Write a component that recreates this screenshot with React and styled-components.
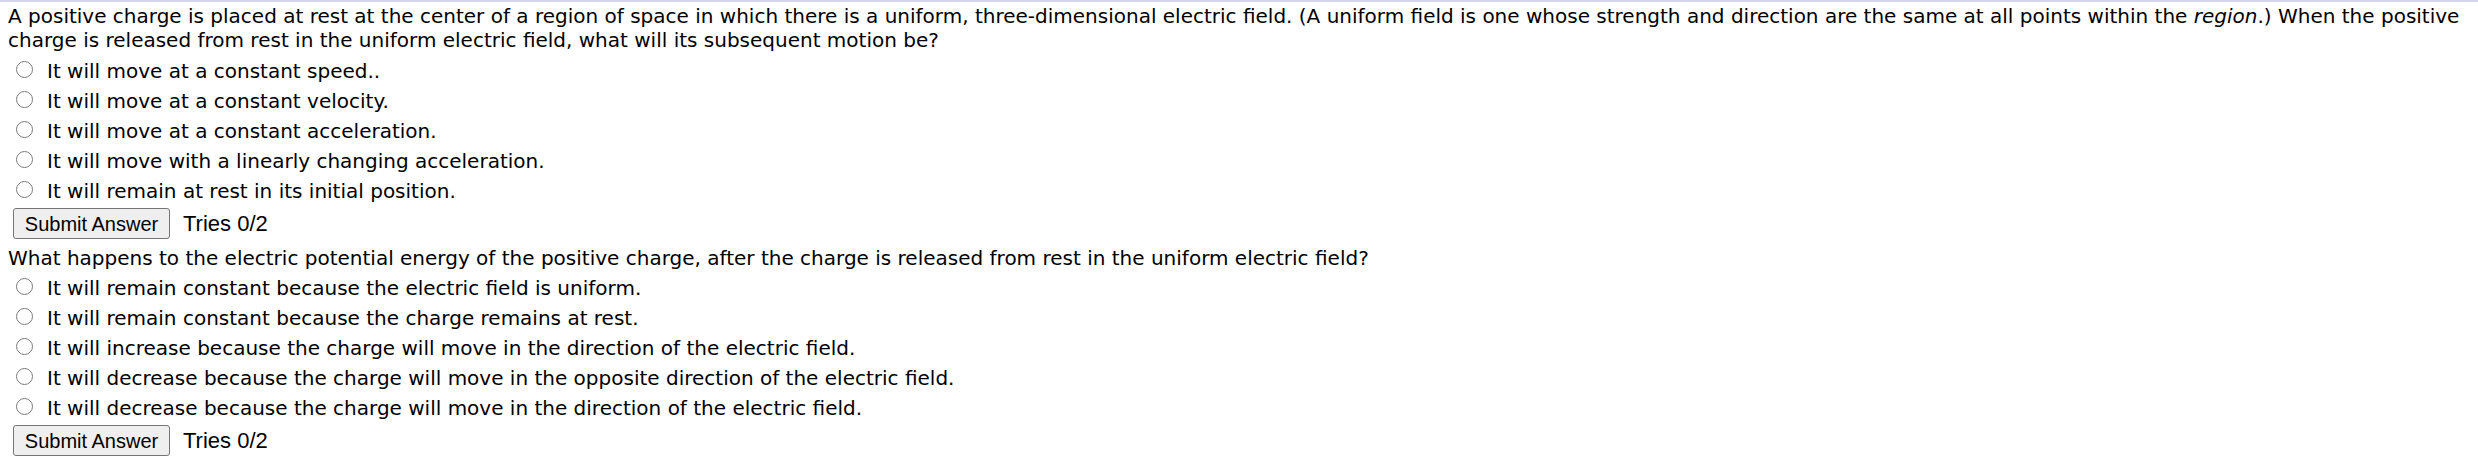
import React from "react";
import styled, { createGlobalStyle } from "styled-components";

const GlobalStyle = createGlobalStyle`
  html, body {
    margin: 0;
    padding: 0;
    background: #fff;
  }
`;

const Page = styled.div`
  border-top: 2px solid #d6d6ea;
  padding: 2px 8px 0;
  color: #000;
  font-family: "DejaVu Sans", Verdana, sans-serif;
  font-size: 20px;
`;

const Problem = styled.div`
  display: flex;
  flex-direction: column;
`;

const Question = styled.div`
  line-height: 24px;
  margin-bottom: ${(p) => p.$gap}px;
`;

const Options = styled.div`
  display: flex;
  flex-direction: column;
`;

const Option = styled.label`
  display: flex;
  align-items: center;
  height: 30px;
  gap: 14px;
  padding-left: 8px;
`;

const Radio = styled.input.attrs({ type: "radio" })`
  appearance: none;
  margin: 0 0 3px;
  width: 17px;
  height: 17px;
  border: 1.5px solid #7a7a7a;
  border-radius: 50%;
  background: #fff;
  flex: none;
`;

const Actions = styled.div`
  display: flex;
  align-items: center;
  gap: 13px;
  padding: 2px 0 7px 5px;
`;

const SubmitButton = styled.button`
  font-family: "Liberation Sans", Arial, sans-serif;
  font-size: 20px;
  color: #000;
  background: #efefef;
  border: 1.5px solid #767676;
  border-radius: 3px;
  height: 31px;
  width: 157px;
  padding: 0;
  line-height: 1;
`;

const Tries = styled.span`
  font-family: "Liberation Sans", Arial, sans-serif;
  font-size: 22px;
`;

const problems = [
  {
    gap: 4,
    question: (
      <>
        A positive charge is placed at rest at the center of a region of space in which there is a
        uniform, three-dimensional electric field. (A uniform field is one whose strength and
        direction are the same at all points within the <i>region</i>.) When the positive charge is
        released from rest in the uniform electric field, what will its subsequent motion be?
      </>
    ),
    options: [
      "It will move at a constant speed..",
      "It will move at a constant velocity.",
      "It will move at a constant acceleration.",
      "It will move with a linearly changing acceleration.",
      "It will remain at rest in its initial position.",
    ],
  },
  {
    gap: 3,
    question:
      "What happens to the electric potential energy of the positive charge, after the charge is released from rest in the uniform electric field?",
    options: [
      "It will remain constant because the electric field is uniform.",
      "It will remain constant because the charge remains at rest.",
      "It will increase because the charge will move in the direction of the electric field.",
      "It will decrease because the charge will move in the opposite direction of the electric field.",
      "It will decrease because the charge will move in the direction of the electric field.",
    ],
  },
];

export default function App() {
  return (
    <>
      <GlobalStyle />
      <Page>
        {problems.map((p, i) => (
          <Problem key={i}>
            <Question $gap={p.gap}>{p.question}</Question>
            <Options>
              {p.options.map((o) => (
                <Option key={o}>
                  <Radio name={`q${i}`} />
                  <span>{o}</span>
                </Option>
              ))}
            </Options>
            <Actions>
              <SubmitButton>Submit Answer</SubmitButton>
              <Tries>Tries 0/2</Tries>
            </Actions>
          </Problem>
        ))}
      </Page>
    </>
  );
}
